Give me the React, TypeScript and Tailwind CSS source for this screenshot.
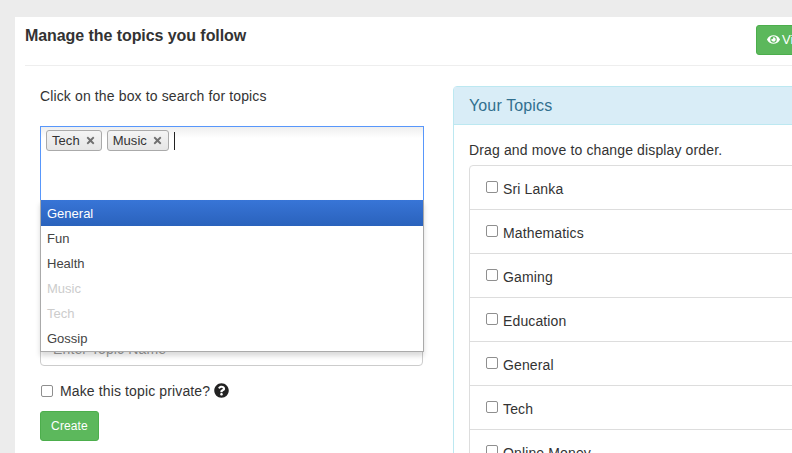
import { FaEye, FaQuestionCircle, FaTimes } from 'react-icons/fa';

const options = [
  { name: 'General', state: 'active' },
  { name: 'Fun', state: '' },
  { name: 'Health', state: '' },
  { name: 'Music', state: 'off' },
  { name: 'Tech', state: 'off' },
  { name: 'Gossip', state: '' },
];

const topics = ['Sri Lanka', 'Mathematics', 'Gaming', 'Education', 'General', 'Tech', 'Online Money'];

function Chip({ label }: { label: string }) {
  return (
    <span className="flex h-[21px] items-center rounded-[3px] border border-[#aaaaaa] bg-gradient-to-b from-[#f4f4f4] to-[#e6e6e6] pl-[5px] pr-[5px] text-[13px] leading-none tracking-[0.05px] text-[#333333]">
      {label}
      <FaTimes className="ml-[5px] text-[11px] text-[#707070]" />
    </span>
  );
}

function Checkbox({ className }: { className: string }) {
  return <span className={`block h-[12px] w-[12px] rounded-[2px] border border-[#8f8f8f] bg-white ${className}`} />;
}

export default function App() {
  return (
    <div className="h-[453px] w-[792px] overflow-hidden bg-[#ececec] pl-[15px] pt-[17px] font-['Liberation_Sans',sans-serif] text-[14px] tracking-[0.13px] text-[#333333]">
      <div className="h-[436px] w-[900px] bg-white px-[10px]">
        {/* Header */}
        <div className="flex h-[49px] w-[880px] justify-between border-b border-[#eeeeee]">
          <h1 className="pt-[9px] text-[16px] font-bold leading-[20px] tracking-[-0.07px]">Manage the topics you follow</h1>
          <button className="mr-[65px] mt-[8px] flex h-[30px] w-[84px] items-center rounded-[3px] border border-[#4cae4c] bg-[#5cb85c] pb-[1px] pl-[10px] text-[13px] text-white">
            <FaEye className="mr-[2px] text-[13px]" />
            View
          </button>
        </div>

        <div className="flex">
          {/* Left column */}
          <div className="ml-[15px] w-[384px]">
            <p className="mt-[20px] leading-[20px]">Click on the box to search for topics</p>

            <div className="relative mt-[20px]">
              <div className="flex h-[75px] items-start gap-[5px] border border-[#5897fb] bg-gradient-to-b from-[#eeeeee] to-white to-[15%] pl-[5px] pt-[3px]">
                <Chip label="Tech" />
                <Chip label="Music" />
                <span className="mt-[2px] h-[18px] w-px bg-[#222222]" />
              </div>
              <ul className="absolute left-0 top-[74px] z-10 w-[384px] border-x border-b border-[#aaaaaa] bg-white text-[13px] tracking-normal shadow-[0_4px_5px_rgba(0,0,0,0.15)]">
                {options.map((o) => (
                  <li
                    key={o.name}
                    className={
                      o.state === 'active'
                        ? 'flex h-[26px] items-center bg-gradient-to-b from-[#3875d7] to-[#2a62bc] pl-[6px] pt-[1px] text-white'
                        : o.state === 'off'
                          ? 'flex h-[25px] items-center pl-[6px] text-[#cccccc]'
                          : 'flex h-[25px] items-center pl-[6px] text-[#444444]'
                    }
                  >
                    {o.name}
                  </li>
                ))}
              </ul>
            </div>

            <div className="mt-[130px] flex h-[35px] w-[383px] items-center rounded-[4px] border border-[#cccccc] pl-[12px] pt-[2px] text-[#999999]">
              Enter Topic Name
            </div>

            <label className="mt-[15px] flex h-[20px] items-center">
              <Checkbox className="ml-[1px]" />
              <span className="ml-[7px]">Make this topic private?</span>
              <FaQuestionCircle className="-mt-[1px] ml-[4px] text-[15px] text-[#222222]" />
            </label>

            <button className="mt-[10px] h-[30px] w-[59px] rounded-[3px] border border-[#4cae4c] bg-[#5cb85c] text-[12px] text-white">
              Create
            </button>
          </div>

          {/* Your topics */}
          <div className="ml-[29px] mt-[20px] h-[400px] w-[400px] rounded-t-[4px] border border-[#bce8f1]">
            <div className="flex h-[38px] items-center border-b border-[#bce8f1] bg-[#d9edf7] pl-[15px] text-[16px] text-[#31708f]">
              Your Topics
            </div>
            <div className="px-[15px]">
              <p className="mt-[15px] leading-[20px]">Drag and move to change display order.</p>
              <ul className="mt-[5px] rounded-t-[4px] border border-[#dddddd]">
                {topics.map((t) => (
                  <li key={t} className="flex h-[44px] border-b border-[#dddddd] pl-[16px] pt-[15px]">
                    <Checkbox className="" />
                    <span className="ml-[5px] leading-[17px]">{t}</span>
                  </li>
                ))}
              </ul>
            </div>
          </div>
        </div>
      </div>
    </div>
  );
}
